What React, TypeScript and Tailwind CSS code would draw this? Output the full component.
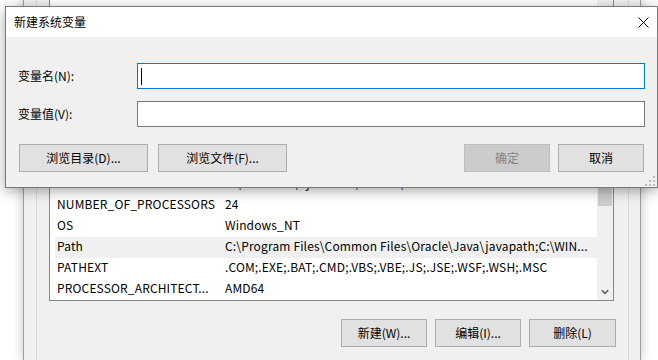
import React from "react";

const rows: [string, string, boolean?][] = [
  ["ComSpec", "C:\\Windows\\system32\\cmd.exe"],
  ["DriverData", "C:\\Windows\\System32\\Drivers\\DriverData"],
  ["NUMBER_OF_PROCESSORS", "24"],
  ["OS", "Windows_NT"],
  ["Path", "C:\\Program Files\\Common Files\\Oracle\\Java\\javapath;C:\\WIN...", true],
  ["PATHEXT", ".COM;.EXE;.BAT;.CMD;.VBS;.VBE;.JS;.JSE;.WSF;.WSH;.MSC"],
  ["PROCESSOR_ARCHITECT...", "AMD64"],
];

function Btn({ children, w, disabled }: { children: React.ReactNode; w: string; disabled?: boolean }) {
  return (
    <div
      className={
        "h-[28px] flex items-center justify-center border text-[12px] leading-none " +
        w +
        (disabled
          ? " bg-[#cccccc] border-[#bfbfbf] text-[#838383]"
          : " bg-[#e1e1e1] border-[#adadad] text-black")
      }
    >
      {children}
    </div>
  );
}

export default function App() {
  return (
    <div className="relative w-[658px] h-[360px] overflow-hidden bg-white font-['Noto_Sans_CJK_SC','Noto_Sans',sans-serif] text-[12px] text-black">
      {/* background window */}
      <div className="ml-[23px] w-[618px] h-[360px] border-x border-[#a0a0a0] bg-[#f0f0f0] pl-[12px] pr-[11px] shadow-[0_0_10px_rgba(0,0,0,0.25)]">
        <div className="h-full border-x border-[#dadada] flex flex-col">
          <div className="ml-[12px] w-[565px] h-[301px] border-x border-b border-[#828790] bg-white flex">
            <div className="flex-1 flex flex-col justify-end overflow-hidden pl-[5px]">
              {rows.map(([k, v, sel]) => (
                <div
                  key={k}
                  className={
                    "h-[21px] shrink-0 flex items-center pb-[3px] whitespace-nowrap leading-[16px] tracking-[0.15px] " +
                    (sel ? "bg-[#f0f0f0]" : "")
                  }
                >
                  <div className="w-[168px] pl-[2px] shrink-0">{k}</div>
                  <div className="pl-[2px]">{v}</div>
                </div>
              ))}
            </div>
            <div className="w-[16px] bg-[#f0f0f0] flex flex-col">
              <div className="flex-1 flex flex-col justify-end">
                <div className="h-[40px] mx-[1px] bg-[#cdcdcd]" />
              </div>
              <div className="h-[77px]" />
              <div className="h-[17px] flex items-center justify-center">
                <svg width="8" height="6" viewBox="0 0 8 6">
                  <path d="M0.8 1.2 L4 4.4 L7.2 1.2" fill="none" stroke="#606060" strokeWidth="1.6" />
                </svg>
              </div>
            </div>
          </div>
          <div className="mt-[18px] flex justify-end gap-[8px] pr-[12px]">
            <Btn w="w-[86px]">新建(W)...</Btn>
            <Btn w="w-[86px]">编辑(I)...</Btn>
            <Btn w="w-[87px]">删除(L)</Btn>
          </div>
        </div>
      </div>

      {/* dialog */}
      <div className="absolute left-[5px] top-[6px] w-[653px] h-[182px] border border-[#7a7a7a] bg-[#f0f0f0] flex flex-col shadow-[0_3px_12px_rgba(0,0,0,0.35)]">
        <div className="h-[30px] bg-white flex items-center justify-between">
          <div className="pl-[8px] leading-none">新建系统变量</div>
          <div className="w-[28px] h-full flex items-center justify-center">
            <svg width="11" height="11" viewBox="0 0 11 11">
              <path d="M0.5 0.5 L10.5 10.5 M10.5 0.5 L0.5 10.5" stroke="#000" strokeWidth="1" />
            </svg>
          </div>
        </div>
        <div className="flex-1 flex flex-col pt-[26px] relative">
          <div className="flex items-center pl-[12px] pr-[12px]">
            <div className="w-[119px] leading-none">变量名(N):</div>
            <div className="flex-1 h-[26px] border border-[#0078d7] bg-white flex items-center pl-[3px]">
              <div className="w-[1px] h-[17px] bg-black" />
            </div>
          </div>
          <div className="mt-[12px] flex items-center pl-[12px] pr-[12px]">
            <div className="w-[119px] leading-none">变量值(V):</div>
            <div className="flex-1 h-[26px] border border-[#7a7a7a] bg-white" />
          </div>
          <div className="mt-[17px] flex items-center pl-[13px] pr-[13px]">
            <Btn w="w-[129px]">浏览目录(D)...</Btn>
            <div className="ml-[10px]">
              <Btn w="w-[129px]">浏览文件(F)...</Btn>
            </div>
            <div className="flex-1" />
            <Btn w="w-[86px]" disabled>
              确定
            </Btn>
            <div className="ml-[8px]">
              <Btn w="w-[86px]">取消</Btn>
            </div>
          </div>
          <svg className="absolute right-[2px] bottom-[1px]" width="10" height="10" viewBox="0 0 10 10">
            <rect x="8" y="0" width="2" height="2" fill="#bcbcbc" />
            <rect x="4" y="4" width="2" height="2" fill="#bcbcbc" />
            <rect x="8" y="4" width="2" height="2" fill="#bcbcbc" />
            <rect x="0" y="8" width="2" height="2" fill="#bcbcbc" />
            <rect x="4" y="8" width="2" height="2" fill="#bcbcbc" />
            <rect x="8" y="8" width="2" height="2" fill="#bcbcbc" />
          </svg>
        </div>
      </div>
    </div>
  );
}
